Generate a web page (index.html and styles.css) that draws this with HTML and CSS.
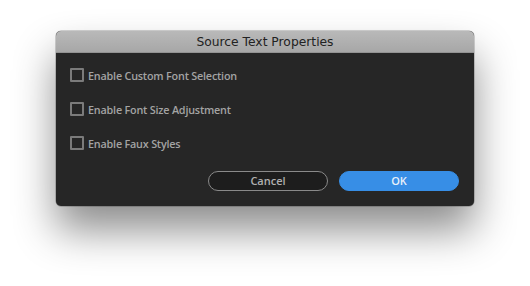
FILE: index.html
```html
<!DOCTYPE html>
<html>
<head>
<meta charset="utf-8">
<link rel="stylesheet" href="styles.css">
</head>
<body>
<div class="stage">
  <div class="window">
    <div class="titlebar">Source Text Properties</div>
    <div class="content">
      <label class="opt"><span class="box"></span>Enable Custom Font Selection</label>
      <label class="opt"><span class="box"></span>Enable Font Size Adjustment</label>
      <label class="opt"><span class="box"></span>Enable Faux Styles</label>
      <div class="buttons">
        <button class="btn cancel">Cancel</button>
        <button class="btn ok">OK</button>
      </div>
    </div>
  </div>
</div>
</body>
</html>
```
FILE: styles.css
```css
html, body {
  margin: 0;
  padding: 0;
  background: #ffffff;
  width: 530px;
  height: 286px;
  overflow: hidden;
}
.stage {
  padding: 31px 56px 0 56px;
}
.window {
  width: 418px;
  height: 175px;
  border-radius: 5px;
  overflow: hidden;
  background: #262626;
  box-shadow: 0 24px 42px rgba(0,0,0,0.45), 0 0 0 0.5px rgba(0,0,0,0.35);
  display: flex;
  flex-direction: column;
}
.titlebar {
  height: 22px;
  flex: none;
  background: linear-gradient(#b9b9b9, #a7a7a7);
  border-bottom: 1px solid #939393;
  color: #222;
  font-family: "DejaVu Sans", sans-serif;
  font-size: 12.3px;
  line-height: 23px;
  text-align: center;
  box-sizing: border-box;
}
.content {
  flex: 1;
  padding: 15px 15px 0 14px;
  display: flex;
  flex-direction: column;
}
.opt {
  display: flex;
  align-items: center;
  height: 14px;
  margin-bottom: 20px;
  font-family: "Open Sans", sans-serif;
  font-size: 10.8px;
  font-weight: 600;
  color: #a3a3a3;
  letter-spacing: -0.2px;
}
.box {
  width: 10px;
  height: 10px;
  border: 2px solid #7b7b7b;
  border-radius: 1px;
  margin-right: 4px;
  flex: none;
}
.buttons {
  margin-top: 1px;
  display: flex;
  justify-content: flex-end;
  gap: 11px;
}
.btn {
  width: 120px;
  height: 20px;
  border-radius: 10px;
  font-family: "Open Sans", sans-serif;
  font-size: 11px;
  font-weight: 600;
  padding: 0;
  line-height: 18px;
}
.cancel {
  background: #1d1d1d;
  border: 1px solid #8a8a8a;
  color: #b0b0b0;
}
.ok {
  background: #378ee6;
  border: 1px solid #378ee6;
  color: #e8f0fa;
}
```
